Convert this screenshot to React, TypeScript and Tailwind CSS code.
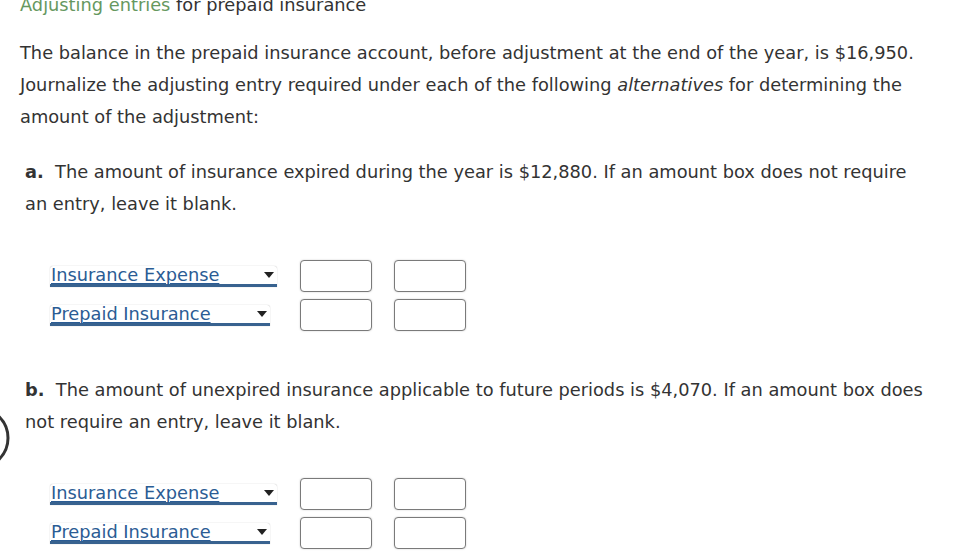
import React from "react";

const font = { fontFamily: '"DejaVu Sans", Verdana, sans-serif' };

function Dropdown({ label, width }: { label: string; width: string }) {
  return (
    <div className="w-[250px] flex items-center">
      <div
        className={`${width} h-[21px] flex items-center justify-between bg-white rounded-t-[3px] shadow-[0_0_1px_rgba(0,0,0,0.35)] border-b-[3px] border-[#38628f]`}
      >
        <span className="text-[#2b5c94] underline underline-offset-[2px] decoration-[1px] text-[17.8px] leading-[18px] pl-px">
          {label}
        </span>
        <svg width="10" height="6" viewBox="0 0 10 6" className="mr-[3px]">
          <path d="M0 0 L10 0 L5 6 Z" fill="#222" />
        </svg>
      </div>
    </div>
  );
}

function AmountBox() {
  return (
    <div className="w-[72px] h-[32px] rounded-[4px] border-[1.5px] border-[#7a7a7a] bg-white shadow-[0_0_2px_rgba(0,0,0,0.2)]" />
  );
}

function EntryRows() {
  const rows = [
    { label: "Insurance Expense", width: "w-[227px]" },
    { label: "Prepaid Insurance", width: "w-[220px]" },
  ];
  return (
    <div className="pl-[50px] flex flex-col gap-[7px]">
      {rows.map((r) => (
        <div key={r.label} className="flex items-center">
          <Dropdown label={r.label} width={r.width} />
          <div className="flex gap-[22px]">
            <AmountBox />
            <AmountBox />
          </div>
        </div>
      ))}
    </div>
  );
}

export default function App() {
  return (
    <div className="relative w-[954px] h-[558px] overflow-hidden bg-white text-[#333] text-[17.8px] leading-[32px]" style={font}>
      <div className="-mt-[11px] pl-[20px]">
        <span className="text-[#66985f]">Adjusting entries</span> for prepaid insurance
      </div>

      <p className="mt-[16px] pl-[20px] pr-[20px]">
        The balance in the prepaid insurance account, before adjustment at the end of the year, is $16,950.
        Journalize the adjusting entry required under each of the following <i>alternatives</i> for determining the
        amount of the adjustment:
      </p>

      <p className="mt-[23px] pl-[25px] pr-[20px]">
        <b>a.</b>&nbsp; The amount of insurance expired during the year is $12,880. If an amount box does not require
        an entry, leave it blank.
      </p>

      <div className="mt-[40px]">
        <EntryRows />
      </div>

      <p className="mt-[43px] pl-[25px] pr-[4px]">
        <b>b.</b>&nbsp; The amount of unexpired insurance applicable to future periods is $4,070. If an amount box does
        not require an entry, leave it blank.
      </p>

      <div className="mt-[40px]">
        <EntryRows />
      </div>

      <svg className="absolute left-0 top-[405px]" width="12" height="66" viewBox="0 0 12 66">
        <circle cx="-22" cy="33" r="30" fill="none" stroke="#333" strokeWidth="3" />
      </svg>
    </div>
  );
}
